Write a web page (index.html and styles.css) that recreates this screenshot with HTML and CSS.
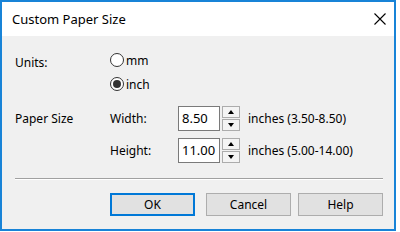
FILE: index.html
```html
<!DOCTYPE html>
<html lang="en">
<head>
    <meta charset="UTF-8">
    <title>Custom Paper Size</title>
    <link rel="stylesheet" href="styles.css">
</head>
<body>
    <div class="window">
        <div class="title-bar">
            <span class="title">Custom Paper Size</span>
            <svg class="close" width="12" height="12" viewBox="0 0 12 12">
                <path d="M0.5 0.5 L11.5 11.5 M11.5 0.5 L0.5 11.5" stroke="#000" stroke-width="1.1" fill="none"/>
            </svg>
        </div>

        <div class="dialog-body">
            <div class="units">
                <div class="units-label">Units:</div>
                <div class="radios">
                    <div class="radio-row"><span class="radio"></span>mm</div>
                    <div class="radio-row"><span class="radio checked"></span>inch</div>
                </div>
            </div>

            <div class="paper">
                <div class="paper-label">Paper Size</div>
                <div class="field-label">Width:</div>
                <div class="spin-box">
                    <div class="text-box">8.50</div>
                    <div class="spinner">
                        <span class="spin-btn"><span class="arrow up"></span></span>
                        <span class="spin-btn"><span class="arrow down"></span></span>
                    </div>
                </div>
                <div class="hint">inches (3.50-8.50)</div>

                <div></div>
                <div class="field-label">Height:</div>
                <div class="spin-box">
                    <div class="text-box">11.00</div>
                    <div class="spinner">
                        <span class="spin-btn"><span class="arrow up"></span></span>
                        <span class="spin-btn"><span class="arrow down"></span></span>
                    </div>
                </div>
                <div class="hint">inches (5.00-14.00)</div>
            </div>

            <div class="separator"></div>

            <div class="buttons">
                <button class="btn default">OK</button>
                <button class="btn cancel">Cancel</button>
                <button class="btn">Help</button>
            </div>
        </div>
    </div>
</body>
</html>
```

FILE: styles.css
```css
body {
    margin: 0;
    background: #fff;
    font-family: "Noto Sans", "Liberation Sans", sans-serif;
    font-size: 12px;
    color: #000;
}

.window {
    width: 396px;
    height: 231px;
    box-sizing: border-box;
    border: 2px solid #1883d7;
    display: flex;
    flex-direction: column;
}

.title-bar {
    height: 34px;
    background: #fff;
    display: flex;
    align-items: center;
    justify-content: space-between;
    padding: 0 8px 0 10px;
}

.title {
    font-size: 13px;
}

.dialog-body {
    flex: 1;
    background: #f0f0f0;
    padding: 12px 11px 0 13px;
    display: flex;
    flex-direction: column;
}

.units {
    display: grid;
    grid-template-columns: 95px 1fr;
}

.units-label {
    line-height: 24px;
    margin-top: 3px;
}

.radio-row {
    height: 24px;
    display: flex;
    align-items: center;
}

.radio {
    width: 14px;
    height: 14px;
    box-sizing: border-box;
    border: 1px solid #333;
    border-radius: 50%;
    background: #fff;
    margin-right: 2px;
    display: flex;
    align-items: center;
    justify-content: center;
}

.radio.checked::after {
    content: "";
    width: 8px;
    height: 8px;
    border-radius: 50%;
    background: #333;
}

.paper {
    display: grid;
    grid-template-columns: 95px 68px 62px 1fr;
    grid-auto-rows: 25px;
    row-gap: 7px;
    align-items: center;
    margin-top: 10px;
}

.spin-box {
    display: flex;
    height: 25px;
    gap: 2px;
}

.text-box {
    width: 42px;
    box-sizing: border-box;
    border: 1px solid #7a7a7a;
    background: #fff;
    padding-left: 3px;
    font-size: 13px;
    line-height: 23px;
}

.spinner {
    width: 18px;
    display: flex;
    flex-direction: column;
    gap: 1px;
}

.spin-btn {
    flex: 1;
    box-sizing: border-box;
    border: 1px solid #acacac;
    background: #f4f4f4;
    display: flex;
    align-items: center;
    justify-content: center;
}

.arrow {
    width: 0;
    height: 0;
    border-left: 3.5px solid transparent;
    border-right: 3.5px solid transparent;
}

.arrow.up {
    border-bottom: 4px solid #000;
}

.arrow.down {
    border-top: 4px solid #000;
}

.hint {
    padding-left: 8px;
}

.separator {
    margin-top: 15px;
    border-top: 1px solid #a0a0a0;
    border-bottom: 1px solid #fff;
}

.buttons {
    display: flex;
    justify-content: flex-end;
    margin-top: 13px;
}

.btn {
    width: 85px;
    height: 23px;
    box-sizing: border-box;
    border: 1px solid #adadad;
    background: #e1e1e1;
    font-family: inherit;
    font-size: 12px;
    color: #000;
    padding: 0;
}

.btn.default {
    border: 2px solid #0078d7;
    margin-right: 11px;
}

.btn.cancel {
    margin-right: 7px;
}
```
